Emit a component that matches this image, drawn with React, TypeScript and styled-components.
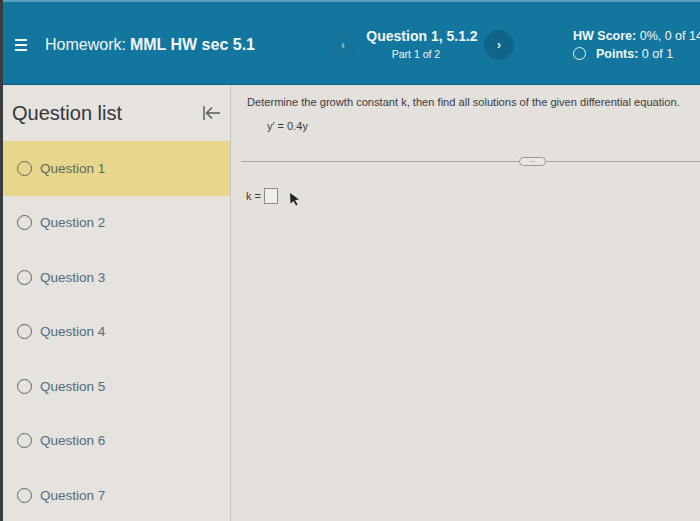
import styled, { createGlobalStyle } from "styled-components";

const GlobalStyle = createGlobalStyle`
  html, body {
    margin: 0;
    padding: 0;
    overflow: hidden;
    background: #e4e0db;
    font-family: "Liberation Sans", Arial, sans-serif;
  }
`;

const Page = styled.div`
  width: 700px;
  height: 521px;
  display: flex;
  flex-direction: column;
  background: #e4e0db;
  border-left: 3px solid #3a3c40;
  box-sizing: border-box;
  overflow: hidden;
`;

const Header = styled.header`
  height: 85px;
  flex-shrink: 0;
  display: flex;
  align-items: center;
  padding-top: 4px;
  background: #12769f;
  border-top: 2px solid #5e9fbb;
  border-bottom: 1px solid #0d5f82;
  box-sizing: border-box;
  color: #f2f6f8;
  white-space: nowrap;
  & > * {
    flex-shrink: 0;
  }
`;

const LeftGroup = styled.div`
  width: 313px;
  display: flex;
  align-items: center;
  gap: 18px;
  padding-left: 12px;
  font-size: 16px;
  b {
    margin-left: 4px;
  }
`;

const Burger = styled.div`
  width: 12px;
  display: flex;
  flex-direction: column;
  gap: 3px;
  span {
    height: 2px;
    background: #f2f6f8;
  }
`;

const NavButton = styled.div<{ $dim?: boolean }>`
  width: 30px;
  height: 30px;
  border-radius: 50%;
  display: flex;
  align-items: center;
  justify-content: center;
  background: ${(p) => (p.$dim ? "#14749c" : "#0f6487")};
  color: ${(p) => (p.$dim ? "#8fc0d6" : "#f2f6f8")};
  font-size: 12px;
  font-weight: bold;
`;

const QuestionTitle = styled.div`
  width: 124px;
  margin-left: 2px;
  text-align: center;
  line-height: 1.15;
  strong {
    display: block;
    font-size: 14px;
  }
  span {
    font-size: 10.5px;
    margin-right: 12px;
  }
`;

const Score = styled.div`
  margin-left: 59px;
  font-size: 12.5px;
  line-height: 1.3;
`;

const Points = styled.div`
  display: flex;
  align-items: center;
  gap: 10px;
  margin-top: 1px;
`;

const Ring = styled.span<{ $size: number; $color: string }>`
  display: inline-block;
  width: ${(p) => p.$size}px;
  height: ${(p) => p.$size}px;
  border-radius: 50%;
  border: 1.5px solid ${(p) => p.$color};
  box-sizing: border-box;
  flex-shrink: 0;
`;

const Body = styled.div`
  flex: 1;
  display: flex;
`;

const Sidebar = styled.aside`
  width: 227px;
  flex-shrink: 0;
  border-right: 1px solid #c6c3bf;
  background: #e6e2dd;
`;

const SidebarHead = styled.div`
  height: 56px;
  display: flex;
  align-items: center;
  justify-content: space-between;
  padding: 0 8px 0 9px;
  color: #34363a;
  font-size: 20px;
`;

const QuestionItem = styled.div<{ $active?: boolean }>`
  height: 54.5px;
  display: flex;
  align-items: center;
  gap: 8px;
  padding-left: 14px;
  background: ${(p) => (p.$active ? "#e7d68c" : "transparent")};
  color: ${(p) => (p.$active ? "#566a5e" : "#4d6c80")};
  font-size: 13.5px;
`;

const Main = styled.main`
  flex: 1;
  padding: 11px 0 0 16px;
  color: #3a3b3e;
`;

const Prompt = styled.p`
  margin: 0;
  font-size: 11.1px;
`;

const Equation = styled.p`
  margin: 12px 0 0 20px;
  font-size: 11px;
`;

const Divider = styled.div`
  position: relative;
  margin: 29px 0 0 -6px;
  height: 1px;
  background: #a8a6a3;
`;

const MorePill = styled.span`
  position: absolute;
  left: 278px;
  top: -4px;
  width: 27px;
  height: 9px;
  border: 1px solid #9a9895;
  border-radius: 5px;
  background: #ebe8e4;
  box-sizing: border-box;
  font-size: 7px;
  line-height: 3px;
  text-align: center;
  color: #6a6866;
`;

const AnswerRow = styled.div`
  margin: 24px 0 0 -1px;
  display: flex;
  align-items: center;
  gap: 3px;
  font-size: 11px;
`;

const AnswerBox = styled.span`
  width: 12px;
  height: 14px;
  border: 1px solid #8d8b88;
  background: #f0eeeb;
`;

const Pointer = styled.svg`
  margin: 6px 0 0 8px;
`;

const questions = [1, 2, 3, 4, 5, 6, 7];

export default function App() {
  return (
    <>
      <GlobalStyle />
      <Page>
        <Header>
          <LeftGroup>
            <Burger>
              <span />
              <span />
              <span />
            </Burger>
            <div>
              Homework:<b>MML HW sec 5.1</b>
            </div>
          </LeftGroup>
          <NavButton $dim>‹</NavButton>
          <QuestionTitle>
            <strong>Question 1, 5.1.2</strong>
            <span>Part 1 of 2</span>
          </QuestionTitle>
          <NavButton>›</NavButton>
          <Score>
            <div>
              <b>HW Score:</b> 0%, 0 of 14 points
            </div>
            <Points>
              <Ring $size={13} $color="#f2f6f8" />
              <span>
                <b>Points:</b> 0 of 1
              </span>
            </Points>
          </Score>
        </Header>
        <Body>
          <Sidebar>
            <SidebarHead>
              <span>Question list</span>
              <svg width="20" height="18" viewBox="0 0 20 18" fill="none" stroke="#55585c" strokeWidth="1.4">
                <path d="M2 2v14M18 9H5M10 3.5L4.5 9l5.5 5.5" />
              </svg>
            </SidebarHead>
            {questions.map((n) => (
              <QuestionItem key={n} $active={n === 1}>
                <Ring $size={15} $color={n === 1 ? "#6b6a50" : "#5f6163"} />
                <span>Question {n}</span>
              </QuestionItem>
            ))}
          </Sidebar>
          <Main>
            <Prompt>
              Determine the growth constant k, then find all solutions of the given differential equation.
            </Prompt>
            <Equation>y′ = 0.4y</Equation>
            <Divider>
              <MorePill>...</MorePill>
            </Divider>
            <AnswerRow>
              <span>k =</span>
              <AnswerBox />
              <Pointer width="12" height="14" viewBox="0 0 12 14">
                <path d="M1 1l9 6.5-4 .6 2.6 4.6-1.5.8-2.6-4.6L1.6 11.5z" fill="#222" />
              </Pointer>
            </AnswerRow>
          </Main>
        </Body>
      </Page>
    </>
  );
}
